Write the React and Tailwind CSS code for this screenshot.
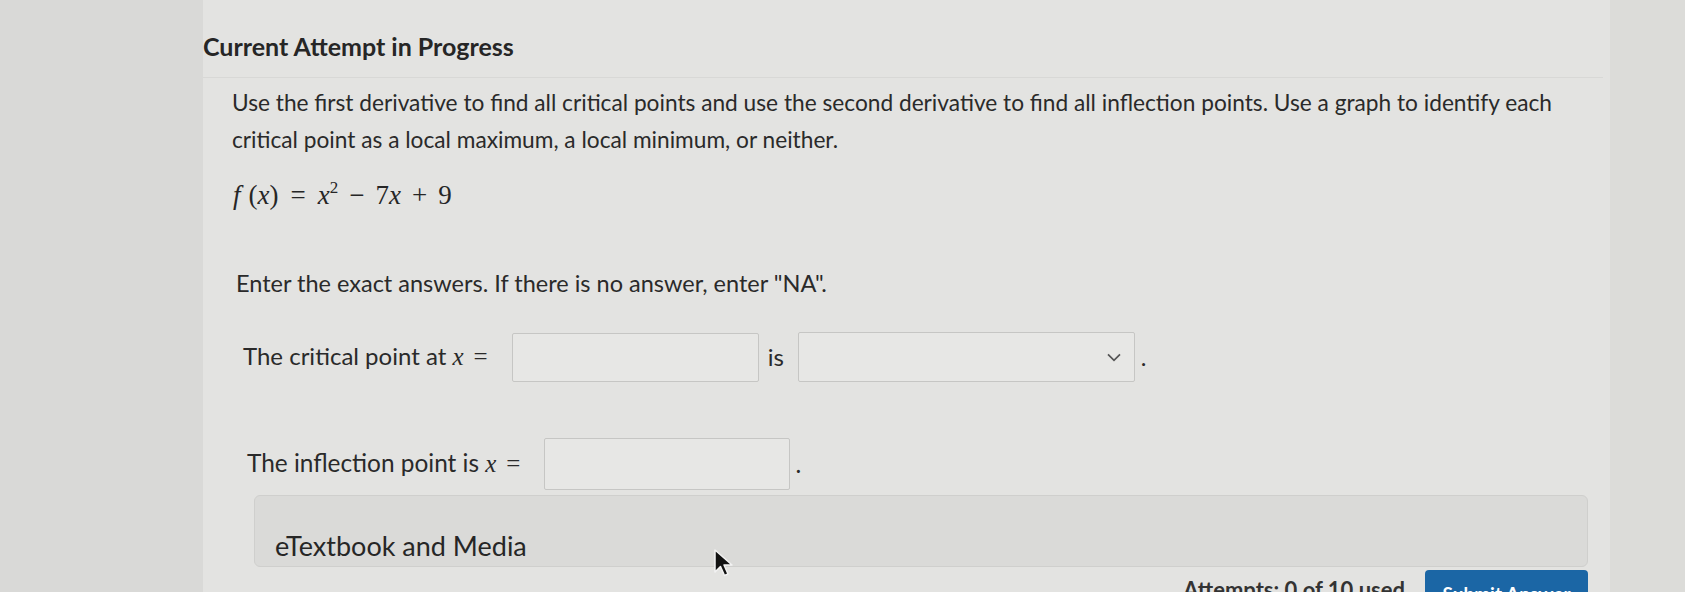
import React from "react";

const serif = { fontFamily: '"Liberation Serif", "Times New Roman", serif' };

function Formula() {
  return (
    <div className="text-[27px] leading-[32px] text-[#262626]" style={serif}>
      <i>f</i>
      <span className="ml-[8px]">(</span>
      <i>x</i>
      <span>)</span>
      <span className="mx-[12px]">=</span>
      <i>x</i>
      <span className="relative -top-[11px] text-[17px]">2</span>
      <span className="mx-[11px]">−</span>
      <span>7</span>
      <i>x</i>
      <span className="mx-[11px]">+</span>
      <span>9</span>
    </div>
  );
}

function MathX({ size }) {
  return (
    <span className={size} style={serif}>
      <i>x</i>
    </span>
  );
}

export default function App() {
  return (
    <div
      className="relative flex h-[592px] w-[1685px] overflow-hidden bg-[#e3e3e1] text-[#2a2a2a]"
      style={{ fontFamily: 'Lato, "Open Sans", sans-serif' }}
    >
      {/* left gutter */}
      <div className="w-[203px] shrink-0 bg-[#d9d9d7]" />

      {/* main */}
      <div className="flex w-[1407px] shrink-0 flex-col pt-[31px]">
        <h1 className="shrink-0 text-[25px] font-bold leading-[30px] text-[#262626]">Current Attempt in Progress</h1>
        <div className="mt-[16px] h-px w-[1400px] shrink-0 bg-[#d8d8d6]" />

        <p className="ml-[29px] mt-[6px] w-[1350px] shrink-0 text-[22.7px] leading-[37px]">
          Use the first derivative to find all critical points and use the second derivative to find all inflection points. Use a graph to identify each critical point as a local maximum, a local minimum, or neither.
        </p>

        <div className="ml-[30px] mt-[21px] shrink-0">
          <Formula />
        </div>

        <p className="ml-[33px] mt-[52px] shrink-0 text-[23.5px] leading-[32px]">
          Enter the exact answers. If there is no answer, enter "NA".
        </p>

        {/* critical point row */}
        <div className="ml-[40px] mt-[33px] flex h-[50px] shrink-0 items-center text-[24px]">
          <span className="whitespace-nowrap">
            The critical point at <MathX size="text-[25px]" />
            <span className="ml-[10px] text-[25px]" style={serif}>=</span>
          </span>
          <div className="ml-[24px] h-[49px] w-[247px] shrink-0 rounded-[2px] border border-[#c6c6c4] bg-[#e7e7e5]" />
          <span className="ml-[9px]">is</span>
          <div className="ml-[14px] flex h-[50px] w-[337px] shrink-0 items-center justify-end rounded-[2px] border border-[#c6c6c4] bg-[#e7e7e5] pr-[13px]">
            <svg width="14" height="9" viewBox="0 0 14 9" fill="none">
              <path d="M1 1.3 L7 7.3 L13 1.3" stroke="#555" strokeWidth="1.7" />
            </svg>
          </div>
          <span className="ml-[6px]">.</span>
        </div>

        {/* inflection row */}
        <div className="ml-[44px] mt-[56px] flex h-[52px] shrink-0 items-center text-[24.4px]">
          <span className="whitespace-nowrap">
            The inflection point is <MathX size="text-[25px]" />
            <span className="ml-[10px] text-[25px]" style={serif}>=</span>
          </span>
          <div className="ml-[24px] h-[52px] w-[246px] shrink-0 rounded-[2px] border border-[#c6c6c4] bg-[#e7e7e5]" />
          <span className="ml-[5px]">.</span>
        </div>

        {/* eTextbook box */}
        <div className="ml-[51px] mt-[5px] flex h-[72px] w-[1334px] shrink-0 items-center rounded-[6px] border border-[#cfcfcd] bg-[#dadad8] pl-[20px] pt-[30px]">
          <span className="text-[27px] leading-[32px] text-[#262626]">eTextbook and Media</span>
        </div>

        {/* bottom row */}
        <div className="mt-[3px] flex w-[1385px] shrink-0 items-start justify-end gap-[20px]">
          <span className="mt-[6px] whitespace-nowrap text-[22px] font-bold leading-[28px] text-[#333]">Attempts: 0 of 10 used</span>
          <div className="flex h-[40px] w-[163px] shrink-0 items-start justify-center rounded-[4px] bg-[#1b66a5] pt-[12px]">
            <span className="whitespace-nowrap text-[19px] font-bold leading-[24px] text-white">Submit Answer</span>
          </div>
        </div>
      </div>

      {/* right gutter */}
      <div className="flex-1 bg-[#dcdcd9]" />

      {/* mouse cursor */}
      <svg className="absolute left-[713px] top-[548px]" width="22" height="30" viewBox="0 0 22 30">
        <path d="M2 2 L2 24 L7.5 18.5 L11.5 27.5 L15 26 L11 17 L19 17 Z" fill="#111" stroke="#f2f2f2" strokeWidth="1.5" strokeLinejoin="round" />
      </svg>
    </div>
  );
}
